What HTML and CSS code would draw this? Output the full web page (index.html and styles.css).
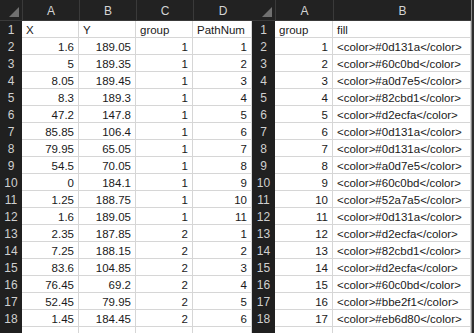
FILE: index.html
```html
<!DOCTYPE html>
<html>
<head>
<meta charset="utf-8">
<link rel="stylesheet" href="styles.css">
</head>
<body>
<div class="screen">
  <div class="sheet sheet-left" id="left"></div>
  <div class="sheet sheet-right" id="right"></div>
  <div class="edge"></div>
</div>
<script>
function build(el, cols, rows) {
  var html = '<div class="corner"><span class="tri"></span></div>';
  cols.forEach(function (c) { html += '<div class="colhead">' + c + '</div>'; });
  rows.forEach(function (r, i) {
    html += '<div class="rowhead">' + (i + 1) + '</div>';
    r.forEach(function (v) {
      var isNum = typeof v === 'number';
      html += '<div class="cell' + (isNum ? ' num' : '') + '">' + (isNum ? v : v.replace(/</g, '&lt;').replace(/>/g, '&gt;')) + '</div>';
    });
  });
  html += '<div class="rowhead"></div>';
  cols.forEach(function () { html += '<div class="cell"></div>'; });
  el.innerHTML = html;
}
build(document.getElementById('left'), ['A', 'B', 'C', 'D'], [
  ['X', 'Y', 'group', 'PathNum'],
  [1.6, 189.05, 1, 1],
  [5, 189.35, 1, 2],
  [8.05, 189.45, 1, 3],
  [8.3, 189.3, 1, 4],
  [47.2, 147.8, 1, 5],
  [85.85, 106.4, 1, 6],
  [79.95, 65.05, 1, 7],
  [54.5, 70.05, 1, 8],
  [0, 184.1, 1, 9],
  [1.25, 188.75, 1, 10],
  [1.6, 189.05, 1, 11],
  [2.35, 187.85, 2, 1],
  [7.25, 188.15, 2, 2],
  [83.6, 104.85, 2, 3],
  [76.45, 69.2, 2, 4],
  [52.45, 79.95, 2, 5],
  [1.45, 184.45, 2, 6]
]);
var fills = ['0d131a','60c0bd','a0d7e5','82cbd1','d2ecfa','0d131a','0d131a','a0d7e5','60c0bd','52a7a5','0d131a','d2ecfa','82cbd1','d2ecfa','60c0bd','bbe2f1','eb6d80'];
var rrows = [['group', 'fill']];
fills.forEach(function (f, i) { rrows.push([i + 1, '<color>#' + f + '</color>']); });
build(document.getElementById('right'), ['A', 'B'], rrows);
</script>
</body>
</html>
```
FILE: styles.css
```css
html, body {
  margin: 0;
  padding: 0;
  background: #262626;
}
.screen {
  display: flex;
  width: 474px;
  height: 333px;
  overflow: hidden;
  font-family: "Liberation Sans", Arial, sans-serif;
  font-size: 11.5px;
}
.sheet {
  display: grid;
  grid-template-rows: 21px;
  grid-auto-rows: 17px;
  align-content: start;
}
.sheet-left {
  grid-template-columns: 22px 57px 57px 57px 59px;
}
.sheet-right {
  grid-template-columns: 23px 58px 138px;
}
.edge {
  flex: 1;
  background: #2e2e2e;
  border-left: 1px solid #8a8a8a;
}
.corner {
  background: #222222;
  position: relative;
  border-bottom: 1px solid #3a3a3a;
}
.tri {
  position: absolute;
  right: 3px;
  bottom: 3px;
  width: 0;
  height: 0;
  border-left: 10px solid transparent;
  border-bottom: 10px solid #707070;
}
.colhead {
  background: #222222;
  color: #d4d4d4;
  font-size: 12px;
  text-align: center;
  line-height: 22px;
  border-left: 1px solid #3a3a3a;
  border-bottom: 1px solid #3a3a3a;
}
.rowhead {
  background: #202020;
  color: #d0d0d0;
  font-size: 12px;
  text-align: center;
  line-height: 18px;
}
.cell {
  box-sizing: border-box;
  background: #ffffff;
  color: #1a1a1a;
  border-right: 1px solid #d6d6d6;
  border-bottom: 1px solid #d6d6d6;
  line-height: 14px;
  padding: 2px 3px 0 4px;
  white-space: nowrap;
  overflow: hidden;
}
.cell.num {
  text-align: right;
  padding-right: 4px;
}
```
